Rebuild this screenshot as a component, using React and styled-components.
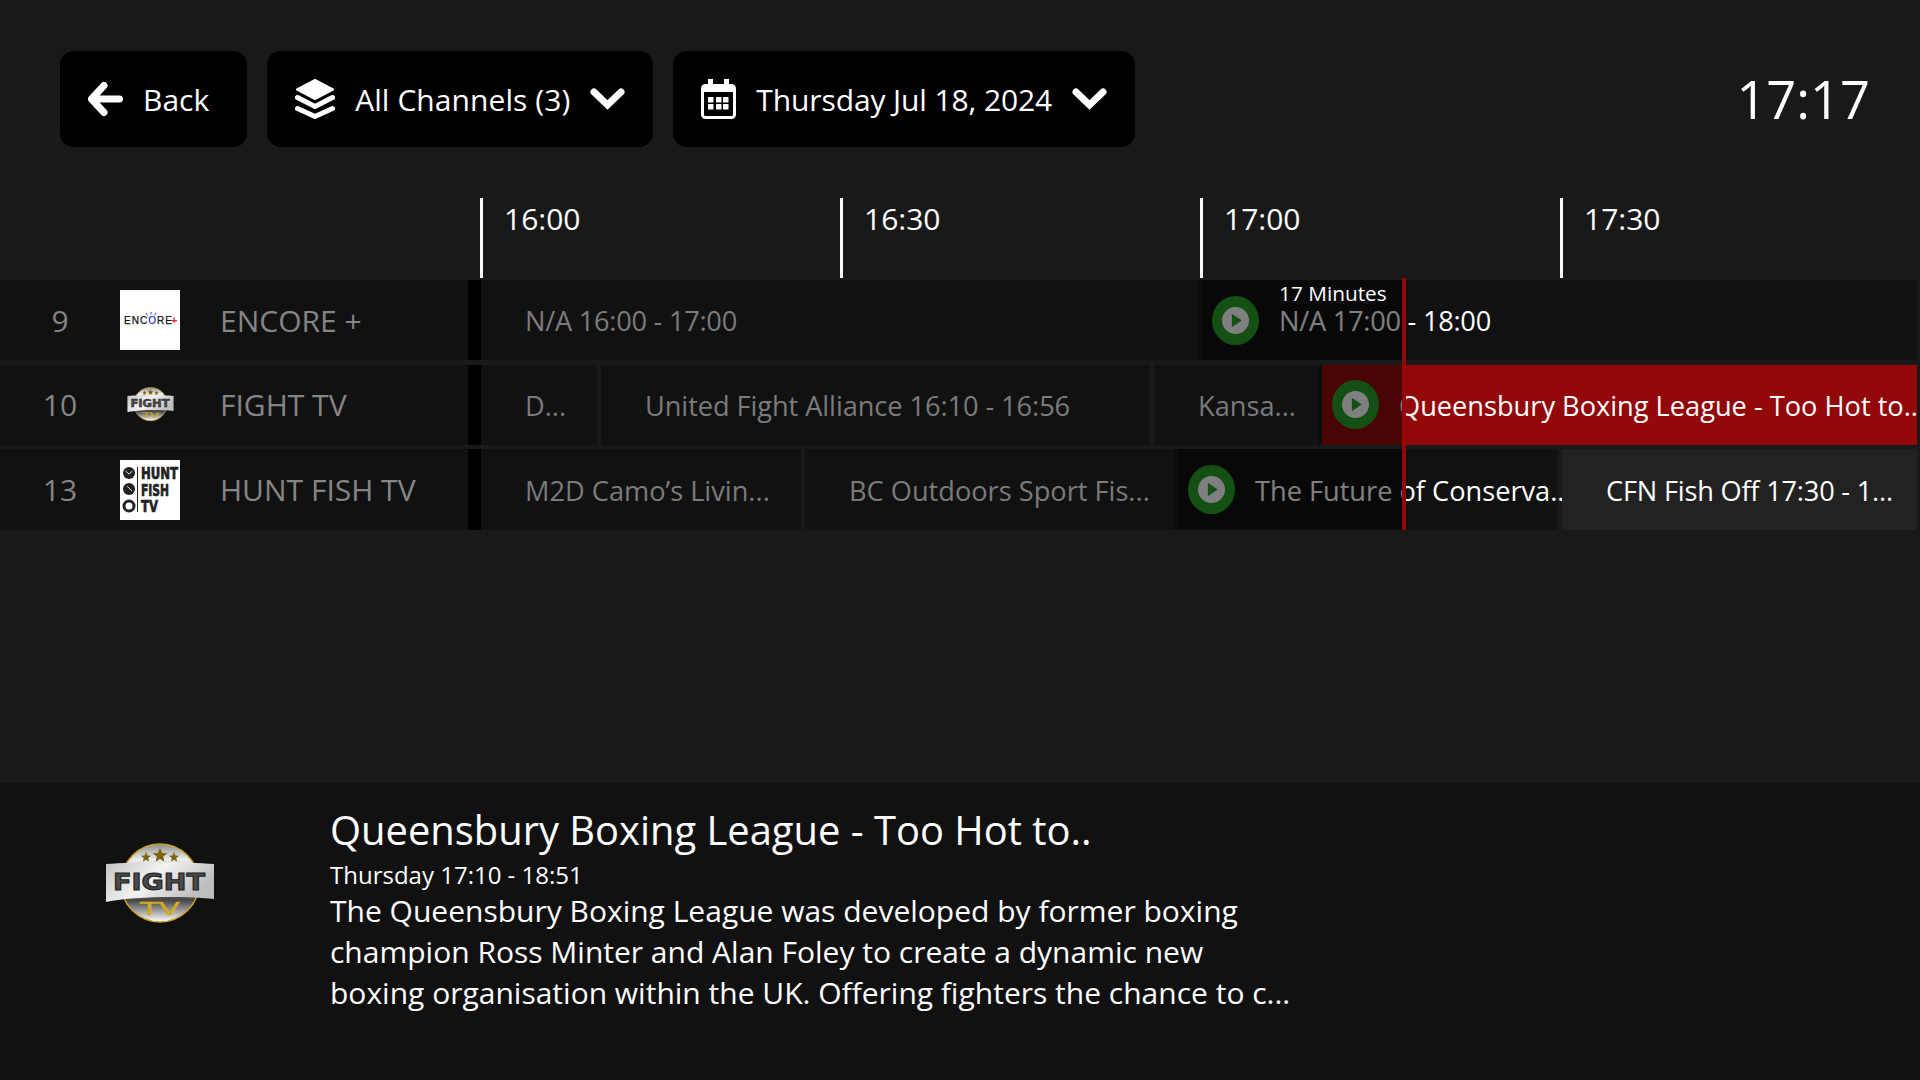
import React from "react";
import styled, { createGlobalStyle } from "styled-components";

const NOW_X = 1404;
const GUIDE_LEFT = 481;
const CELL_GAP = 4;

const channels = [
  {
    number: "9",
    name: "ENCORE +",
    logo: "encore",
    programs: [
      { width: 717, title: "N/A 16:00 - 17:00", spacing: -0.25 },
      { width: 715, title: "N/A 17:00 - 18:00", spacing: -0.25, live: true, note: "17 Minutes" },
    ],
  },
  {
    number: "10",
    name: "FIGHT TV",
    logo: "fight",
    programs: [
      { width: 116, title: "D..." },
      { width: 549, title: "United Fight Alliance 16:10 - 16:56", spacing: -0.07 },
      { width: 164, title: "Kansa..." },
      { width: 595, title: "Queensbury Boxing League - Too Hot to..", live: true, selected: true },
    ],
  },
  {
    number: "13",
    name: "HUNT FISH TV",
    logo: "hunt",
    programs: [
      { width: 320, title: "M2D Camo’s Livin..." },
      { width: 369, title: "BC Outdoors Sport Fis..." },
      { width: 380, title: "The Future of Conserva..", live: true },
      { width: 355, title: "CFN Fish Off 17:30 - 1...", spacing: -0.2, upcoming: true },
    ],
  },
];

const GlobalStyle = createGlobalStyle`
  html, body {
    margin: 0;
    padding: 0;
    background: #1a191a;
    font-family: "Open Sans", sans-serif;
    color: #fff;
  }
`;

const Page = styled.div`
  width: 1920px;
  height: 1080px;
  overflow: hidden;
  display: flex;
  flex-direction: column;
  background: #1a191a;
`;

const TopBar = styled.header`
  display: flex;
  align-items: center;
  gap: 20px;
  height: 96px;
  padding: 51px 50px 0 60px;
`;

const ToolButton = styled.div`
  display: flex;
  align-items: center;
  gap: 20px;
  height: 96px;
  padding: 0 28px;
  box-sizing: border-box;
  background: #000;
  border-radius: 14px;
  font-size: 30px;
  white-space: nowrap;
`;

const BackButton = styled(ToolButton)`
  padding-right: 38px;
`;

const ChannelsLabel = styled.span`
  letter-spacing: 0.07px;
`;

const DateLabel = styled.span`
  letter-spacing: -0.11px;
`;

const Clock = styled.div`
  margin-left: auto;
  font-size: 52.4px;
  line-height: 96px;
`;

const TimeRow = styled.div`
  display: flex;
  height: 80px;
  margin-top: 51px;
  padding-left: ${GUIDE_LEFT - 1}px;
`;

const Tick = styled.div`
  width: 360px;
  box-sizing: border-box;
  border-left: 3px solid #fff;
  padding: 0 0 0 21px;
  font-size: 30px;
  line-height: 42px;
`;

const Guide = styled.div`
  position: relative;
  display: flex;
  flex-direction: column;
  gap: 4.5px;
  margin-top: 2px;
`;

const NowLine = styled.div`
  position: absolute;
  left: ${NOW_X - 2}px;
  top: -2px;
  bottom: 0;
  width: 4px;
  background: #930808;
  z-index: 3;
`;

const Row = styled.div`
  display: flex;
  height: 80px;

  &:nth-child(3) {
    height: 81px;
  }
`;

const ChannelCell = styled.div`
  display: flex;
  align-items: center;
  width: 468px;
  flex: none;
  background: #111;
  color: #858585;
  font-size: 30px;
`;

const ChannelNumber = styled.div`
  width: 120px;
  text-align: center;
`;

const LogoBox = styled.div`
  display: flex;
  align-items: center;
  justify-content: center;
  width: 60px;
  height: 60px;
  flex: none;
  background: ${(p) => (p.$plain ? "transparent" : "#fff")};
`;

const ChannelName = styled.div`
  margin-left: 40px;
  white-space: nowrap;
`;

const Strip = styled.div`
  width: 13px;
  flex: none;
  background: #000;
`;

const Programs = styled.div`
  display: flex;
  gap: ${CELL_GAP}px;
  flex: 1;
  min-width: 0;
`;

const Program = styled.div`
  position: relative;
  display: flex;
  align-items: center;
  flex: none;
  box-sizing: border-box;
  padding-left: ${(p) => (p.$live ? "10px" : "44px")};
  gap: 20px;
  background: ${(p) => (p.$selected ? "#930808" : p.$upcoming ? "#222" : "#111")};
  color: ${(p) => (p.$live || p.$upcoming ? "#fff" : "#7b7b7b")};
  font-size: 27.2px;
  line-height: 28px;
  letter-spacing: ${(p) => p.$spacing || 0}px;
  white-space: nowrap;
`;

const ProgramTitle = styled.span`
  padding-top: 2px;
`;

const PastShade = styled.div`
  position: absolute;
  left: -${CELL_GAP}px;
  top: 0;
  bottom: 0;
  background: rgba(0, 0, 0, 0.5);
`;

const Note = styled.div`
  position: absolute;
  left: 77px;
  top: 0;
  font-size: 20.8px;
  line-height: 26px;
  letter-spacing: 0;
  color: #fff;
  z-index: 1;
`;

const PlayBadge = styled.div`
  display: flex;
  align-items: center;
  justify-content: center;
  width: 47px;
  height: 49px;
  flex: none;
  border-radius: 50%;
  background: #289e28;
`;

const InfoPanel = styled.section`
  display: flex;
  margin-top: auto;
  height: 297px;
  background: #111;
`;

const InfoLogo = styled.div`
  width: 330px;
  flex: none;
  display: flex;
  justify-content: center;
  padding: 60px 10px 0 0;
  box-sizing: border-box;
`;

const InfoText = styled.div`
  padding-top: 21px;
  white-space: nowrap;
`;

const InfoTitle = styled.div`
  font-size: 39.9px;
  line-height: 52px;
`;

const InfoDate = styled.div`
  font-size: 24px;
  line-height: 33px;
  margin-top: 2px;
`;

const InfoBody = styled.div`
  font-size: 30px;
  line-height: 40.8px;
`;

const ArrowIcon = () => (
  <svg width="35" height="34" viewBox="0 0 35 34" fill="none" stroke="#fff" strokeWidth="7" strokeLinecap="round" strokeLinejoin="round">
    <path d="M31.5 17H4M16 3.5 3.5 17 16 30.5" />
  </svg>
);

const LayersIcon = () => (
  <svg width="40" height="40" viewBox="0 0 40 40">
    <path d="M20 1 38 10.5 20 20 2 10.5Z" fill="#fff" stroke="#fff" strokeWidth="2" strokeLinejoin="round" />
    <path d="M2.5 18.5 20 27.5 37.5 18.5" fill="none" stroke="#fff" strokeWidth="5" strokeLinecap="round" strokeLinejoin="round" />
    <path d="M2.5 29.5 20 37.5 37.5 29.5" fill="none" stroke="#fff" strokeWidth="5" strokeLinecap="round" strokeLinejoin="round" />
  </svg>
);

const CalendarIcon = () => {
  const squares = [];
  [18, 25].forEach((y) => [7, 15, 22].forEach((x) => squares.push(<rect key={`${x}-${y}`} x={x} y={y} width="5.5" height="5.5" rx="0.5" fill="#fff" />)));
  return (
    <svg width="35" height="40" viewBox="0 0 35 40">
      <rect x="7" y="0" width="5" height="8" fill="#fff" />
      <rect x="23" y="0" width="5" height="8" fill="#fff" />
      <rect x="1.5" y="6.5" width="32" height="32" rx="3" fill="none" stroke="#fff" strokeWidth="3" />
      <rect x="2" y="6" width="31" height="7" fill="#fff" />
      {squares}
    </svg>
  );
};

const ChevronIcon = () => (
  <svg width="35" height="22" viewBox="0 0 35 22" fill="none" stroke="#fff" strokeWidth="7" strokeLinecap="round" strokeLinejoin="miter">
    <path d="M4 4 17.5 17 31 4" />
  </svg>
);

const PlayIcon = () => (
  <svg width="27" height="27" viewBox="0 0 26 26">
    <circle cx="13" cy="13" r="13" fill="#fff" />
    <path d="M9.5 6.5 19 13 9.5 19.5Z" fill="#289e28" />
  </svg>
);

const EncoreLogo = () => (
  <svg width="60" height="60" viewBox="0 0 60 60">
    <path d="M31 24.5v-2.5M27.5 25.5 26 23M34.5 25.5 36 23" stroke="#2340c8" strokeWidth="1" />
    <text x="4" y="33.5" fontFamily="Liberation Sans, sans-serif" fontSize="10" fill="#111" stroke="#111" strokeWidth="0.25" textLength="48" lengthAdjust="spacing">
      ENC<tspan fill="#2340c8" stroke="#2340c8">O</tspan>RE
    </text>
    <text x="51" y="33.5" fontFamily="Liberation Sans, sans-serif" fontSize="11" fontWeight="700" fill="#ee2030">+</text>
  </svg>
);

const HuntLogo = () => (
  <svg width="60" height="60" viewBox="0 0 60 60">
    <circle cx="9" cy="13" r="6" fill="#222" />
    <path d="M5.5 11 9 14l3.5-3" fill="none" stroke="#ddd" strokeWidth="1" />
    <circle cx="9" cy="29" r="6" fill="#222" />
    <path d="M7 26l5 5" stroke="#ddd" strokeWidth="1" />
    <circle cx="9" cy="46" r="5" fill="#fff" stroke="#222" strokeWidth="3" />
    <path d="M17.5 7v45" stroke="#222" strokeWidth="1" />
    <g fontFamily="DejaVu Sans, sans-serif" fontWeight="700" fontSize="15" fill="#222" stroke="#222" strokeWidth="0.7">
      <text x="21" y="19" textLength="37" lengthAdjust="spacingAndGlyphs">HUNT</text>
      <text x="21" y="36" textLength="28" lengthAdjust="spacingAndGlyphs">FISH</text>
      <text x="21" y="52" textLength="17" lengthAdjust="spacingAndGlyphs">TV</text>
    </g>
  </svg>
);

const Star = ({ x, y, scale }) => (
  <path transform={`translate(${x} ${y}) scale(${scale})`} d="M0-9l2.6 6.4 6.4.5-5 4.1 1.6 6.5L0 5 -5.6 8.5-4 2-9-2.1l6.4-.5z" />
);

const FightLogo = ({ width, idSuffix }) => (
  <svg width={width} height={(width * 80) / 110} viewBox="0 0 110 80">
    <defs>
      <linearGradient id={`disc${idSuffix}`} x1="0" y1="0" x2="0" y2="1">
        <stop offset="0" stopColor="#8d8d8d" />
        <stop offset="0.2" stopColor="#eee" />
        <stop offset="0.72" stopColor="#444" />
        <stop offset="1" stopColor="#fff" />
      </linearGradient>
      <linearGradient id={`band${idSuffix}`} x1="0" y1="0" x2="1" y2="0.4">
        <stop offset="0" stopColor="#c4c4c4" />
        <stop offset="0.5" stopColor="#f3f3f3" />
        <stop offset="1" stopColor="#bdbdbd" />
      </linearGradient>
    </defs>
    <circle cx="55" cy="40" r="39" fill={`url(#disc${idSuffix})`} stroke="#c8a227" strokeWidth="1.5" />
    <g fill="#7c6210">
      <Star x={55} y={12} scale={0.8} />
      <Star x={41} y={14} scale={0.55} />
      <Star x={69} y={14} scale={0.55} />
    </g>
    <path d="M1 21C30 19 80 19 109 21V56C80 53 30 53 1 59Z" fill={`url(#band${idSuffix})`} />
    <text x="8" y="47" fontFamily="DejaVu Sans, sans-serif" fontWeight="700" fontSize="23" fill="#4a4a4a" stroke="#1c1c1c" strokeWidth="1" textLength="92" lengthAdjust="spacingAndGlyphs">FIGHT</text>
    <text x="35" y="72" fontFamily="DejaVu Sans, sans-serif" fontSize="18" fill="#d4ab1f" stroke="#d4ab1f" strokeWidth="0.3" textLength="40" lengthAdjust="spacingAndGlyphs">TV</text>
  </svg>
);

const ChannelLogo = ({ kind }) => {
  if (kind === "encore") return <LogoBox><EncoreLogo /></LogoBox>;
  if (kind === "hunt") return <LogoBox><HuntLogo /></LogoBox>;
  return <LogoBox $plain><FightLogo width={47} idSuffix="small" /></LogoBox>;
};

const ProgramRow = ({ programs }) => {
  let left = GUIDE_LEFT;
  return (
    <Programs>
      {programs.map((p) => {
        const shade = Math.max(0, NOW_X - left) + CELL_GAP;
        const cell = (
          <Program key={p.title} $live={p.live} $selected={p.selected} $upcoming={p.upcoming} $spacing={p.spacing} style={{ width: p.width }}>
            {p.live && (
              <PlayBadge>
                <PlayIcon />
              </PlayBadge>
            )}
            <ProgramTitle>{p.title}</ProgramTitle>
            {p.live && <PastShade style={{ width: shade }} />}
            {p.note && <Note>{p.note}</Note>}
          </Program>
        );
        left += p.width + CELL_GAP;
        return cell;
      })}
    </Programs>
  );
};

const App = () => (
  <Page>
    <GlobalStyle />
    <TopBar>
      <BackButton>
        <ArrowIcon />
        Back
      </BackButton>
      <ToolButton>
        <LayersIcon />
        <ChannelsLabel>All Channels (3)</ChannelsLabel>
        <ChevronIcon />
      </ToolButton>
      <ToolButton>
        <CalendarIcon />
        <DateLabel>Thursday Jul 18, 2024</DateLabel>
        <ChevronIcon />
      </ToolButton>
      <Clock>17:17</Clock>
    </TopBar>

    <TimeRow>
      {["16:00", "16:30", "17:00", "17:30"].map((t) => (
        <Tick key={t}>{t}</Tick>
      ))}
    </TimeRow>

    <Guide>
      {channels.map((c) => (
        <Row key={c.number}>
          <ChannelCell>
            <ChannelNumber>{c.number}</ChannelNumber>
            <ChannelLogo kind={c.logo} />
            <ChannelName>{c.name}</ChannelName>
          </ChannelCell>
          <Strip />
          <ProgramRow programs={c.programs} />
        </Row>
      ))}
      <NowLine />
    </Guide>

    <InfoPanel>
      <InfoLogo>
        <FightLogo width={110} idSuffix="large" />
      </InfoLogo>
      <InfoText>
        <InfoTitle>Queensbury Boxing League - Too Hot to..</InfoTitle>
        <InfoDate>Thursday 17:10 - 18:51</InfoDate>
        <InfoBody>
          The Queensbury Boxing League was developed by former boxing
          <br />
          champion Ross Minter and Alan Foley to create a dynamic new
          <br />
          boxing organisation within the UK. Offering fighters the chance to c...
        </InfoBody>
      </InfoText>
    </InfoPanel>
  </Page>
);

export default App;
